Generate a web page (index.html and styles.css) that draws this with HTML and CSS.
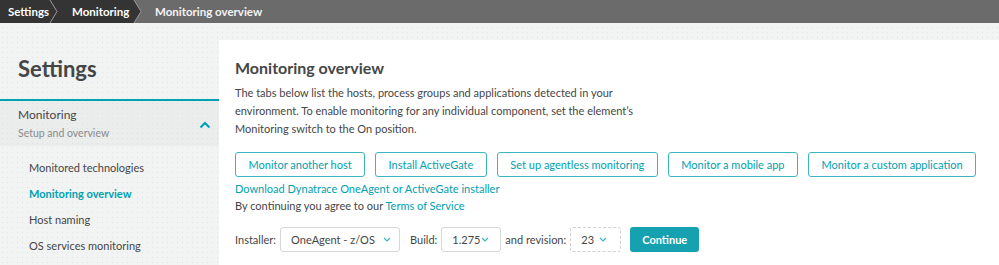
FILE: index.html
```html
<!DOCTYPE html>
<html>
<head>
<meta charset="utf-8">
<link rel="stylesheet" href="styles.css">
</head>
<body>
<nav class="crumbs">
  <span class="crumb dark c1">Settings</span>
  <svg class="sep" width="12" height="23" viewBox="0 0 12 23"><rect x="0" y="0" width="12" height="23" fill="#343434"/><polyline points="1,0 8,11.5 1,23" fill="none" stroke="#9a9a9a" stroke-width="1"/></svg>
  <span class="crumb dark c2">Monitoring</span>
  <svg class="sep" width="12" height="23" viewBox="0 0 12 23"><rect x="0" y="0" width="12" height="23" fill="#6b6b6b"/><polygon points="0,0 1,0 8,11.5 1,23 0,23" fill="#343434"/><polyline points="1,0 8,11.5 1,23" fill="none" stroke="#9a9a9a" stroke-width="1"/></svg>
  <span class="crumb light">Monitoring overview</span>
</nav>
<div class="page">
  <aside class="side">
    <h1 class="side-title">Settings</h1>
    <div class="group">
      <div class="group-text">
        <div class="group-name">Monitoring</div>
        <div class="group-sub">Setup and overview</div>
      </div>
      <svg class="chev" width="12" height="8" viewBox="0 0 12 8"><polyline points="1.5,6.5 6,2 10.5,6.5" fill="none" stroke="#00a1b2" stroke-width="2"/></svg>
    </div>
    <ul class="sub">
      <li>Monitored technologies</li>
      <li class="active">Monitoring overview</li>
      <li>Host naming</li>
      <li>OS services monitoring</li>
    </ul>
  </aside>
  <main class="main">
    <h2 class="title">Monitoring overview</h2>
    <p class="intro">The tabs below list the hosts, process groups and applications detected in your environment. To enable monitoring for any individual component, set the element’s Monitoring switch to the On position.</p>
    <div class="buttons">
      <span class="btn">Monitor another host</span>
      <span class="btn">Install ActiveGate</span>
      <span class="btn">Set up agentless monitoring</span>
      <span class="btn">Monitor a mobile app</span>
      <span class="btn">Monitor a custom application</span>
    </div>
    <div class="link">Download Dynatrace OneAgent or ActiveGate installer</div>
    <div class="terms">By continuing you agree to our <span class="link-inline">Terms of Service</span></div>
    <div class="installer">
      <span class="lbl">Installer:</span>
      <span class="select s1">OneAgent - z/OS<svg class="dd" width="8" height="5" viewBox="0 0 8 5"><polyline points="1,1 4,4 7,1" fill="none" stroke="#3cb4c2" stroke-width="1.2"/></svg></span>
      <span class="lbl">Build:</span>
      <span class="select s2">1.275<svg class="dd" width="8" height="5" viewBox="0 0 8 5"><polyline points="1,1 4,4 7,1" fill="none" stroke="#3cb4c2" stroke-width="1.2"/></svg></span>
      <span class="lbl">and revision:</span>
      <span class="select s3">23<svg class="dd" width="8" height="5" viewBox="0 0 8 5"><polyline points="1,1 4,4 7,1" fill="none" stroke="#3cb4c2" stroke-width="1.2"/></svg></span>
      <span class="primary">Continue</span>
    </div>
  </main>
</div>
</body>
</html>
```
FILE: styles.css
```css
* { box-sizing: border-box; }
html, body { margin: 0; padding: 0; }
body {
  font-family: Lato, "Open Sans", sans-serif;
  color: #454646;
  background-color: #f2f3f3;
  background-image: radial-gradient(circle, #e3e4e4 0.6px, transparent 1px);
  background-size: 5px 5px;
  width: 999px;
  height: 265px;
  overflow: hidden;
}
.crumbs {
  display: flex;
  height: 23px;
  background: #6b6b6b;
  align-items: stretch;
}
.crumb {
  display: flex;
  align-items: center;
  font-size: 11.5px;
  font-weight: 700;
  color: #fff;
  white-space: nowrap;
}
.crumb.dark { background: #343434; }
.c1 { padding-left: 8px; width: 49px; }
.c2 { padding-left: 11px; width: 72px; }
.crumb.light { padding-left: 10px; color: #f4f4f4; }
.sep { display: block; flex: none; }
.page {
  display: flex;
  padding-top: 17px;
  height: 242px;
}
.side {
  width: 219px;
  flex: none;
  margin-top: -17px;
}
.side-title {
  margin: 0;
  padding: 32px 0 0 18px;
  height: 76px;
  font-size: 22px;
  font-weight: 700;
  color: #454646;
}
.group {
  border-top: 2px solid #00a1b2;
  background-color: #ebecec;
  background-image: radial-gradient(circle, #dfe0e0 0.6px, transparent 1px);
  background-size: 5px 5px;
  height: 47px;
  display: flex;
  align-items: center;
  justify-content: space-between;
  padding: 0 8px 0 18px;
}
.group-name { font-size: 12px; margin-top: -2px; }
.group-sub { font-size: 10.5px; color: #8a8b8b; margin-top: 5px; }
.chev { margin-top: 2px; }
.sub {
  list-style: none;
  margin: 0;
  padding: 14px 0 0 29px;
}
.sub li {
  font-size: 11px;
  height: 26px;
  line-height: 16px;
}
.sub li.active { color: #00a1b2; font-weight: 700; }
.main {
  flex: 1;
  background: #fff;
  padding: 18px 0 0 16px;
}
.title {
  margin: 0;
  font-size: 16px;
  font-weight: 700;
  line-height: 20px;
}
.intro {
  margin: 6px 0 0;
  font-size: 11px;
  line-height: 18px;
  width: 410px;
}
.buttons {
  display: flex;
  gap: 10px;
  margin-top: 14px;
}
.btn {
  flex: none;
  white-space: nowrap;
  height: 25px;
  border: 1px solid #3cb4c2;
  border-radius: 3px;
  color: #00a1b2;
  font-size: 11px;
  display: flex;
  align-items: center;
  padding: 0 12.5px;
}
.link {
  color: #00a1b2;
  font-size: 11px;
  margin-top: 3px;
  line-height: 17px;
}
.terms { font-size: 11px; line-height: 17px; }
.link-inline { color: #00a1b2; }
.installer {
  display: flex;
  align-items: center;
  margin-top: 13px;
  font-size: 11px;
  white-space: nowrap;
}
.lbl { margin-right: 4px; }
.select {
  flex: none;
  height: 25px;
  border: 1px solid #d6d7d7;
  border-radius: 3px;
  display: flex;
  align-items: center;
  justify-content: space-between;
  padding: 0 12px 0 10px;
  margin-right: 10px;
}
.s1 { width: 120px; padding-right: 8px; }
.s2 { width: 60px; margin-right: 4px; padding-right: 11px; }
.s3 { width: 51px; border-style: dashed; border-color: #cfd0d0; margin-right: 9px; padding-right: 13px; }
.dd { display: block; }
.primary {
  height: 25px;
  background: #16a1b1;
  color: #fff;
  border-radius: 3px;
  padding: 0 12px;
  display: flex;
  align-items: center;
  font-size: 11px;
  font-weight: 700;
}
```
